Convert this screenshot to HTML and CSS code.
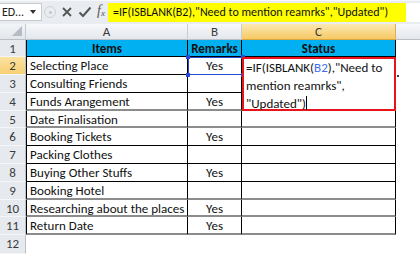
FILE: index.html
```html
<!DOCTYPE html>
<html>
<head>
<meta charset="utf-8">
<link rel="stylesheet" href="styles.css">
</head>
<body>
<div class="app">
  <div class="fbar">
    <div class="namebox"><span class="nbtext">ED...</span><span class="dd"></span></div>
    <div class="handle"><span class="ring"><span class="pip"></span></span></div>
    <div class="btns">
      <svg class="ico" width="12" height="12" viewBox="0 0 12 12"><path d="M2 2 L10 10 M10 2 L2 10" stroke="#555" stroke-width="1.8" fill="none"/></svg>
      <svg class="ico" width="14" height="12" viewBox="0 0 14 12"><path d="M1.5 6.5 L5 10 L12.5 1.5" stroke="#555" stroke-width="2" fill="none"/></svg>
      <span class="fx">f<sub>x</sub></span>
    </div>
    <div class="formula">=IF(ISBLANK(B2),"Need to mention reamrks","Updated")</div>
    <div class="fend"></div>
  </div>
  <div class="sheet">
    <div class="corner"><span class="tri"></span></div>
    <div class="ch">A</div>
    <div class="ch">B</div>
    <div class="ch sel">C</div>
    <div class="ch last"></div>

    <div class="rh">1</div>
    <div class="c hd">Items</div>
    <div class="c hd">Remarks</div>
    <div class="c hd">Status</div>
    <div class="e"></div>

    <div class="rh sel">2</div>
    <div class="c">Selecting Place</div>
    <div class="c y">Yes</div>
    <div class="c"></div>
    <div class="e"></div>

    <div class="rh">3</div>
    <div class="c">Consulting Friends</div>
    <div class="c y"></div>
    <div class="c"></div>
    <div class="e"></div>

    <div class="rh">4</div>
    <div class="c g">Funds Arangement</div>
    <div class="c y g">Yes</div>
    <div class="c g"></div>
    <div class="e"></div>

    <div class="rh">5</div>
    <div class="c g">Date Finalisation</div>
    <div class="c y g"></div>
    <div class="c g"></div>
    <div class="e"></div>

    <div class="rh">6</div>
    <div class="c">Booking Tickets</div>
    <div class="c y">Yes</div>
    <div class="c"></div>
    <div class="e"></div>

    <div class="rh">7</div>
    <div class="c">Packing Clothes</div>
    <div class="c y"></div>
    <div class="c"></div>
    <div class="e"></div>

    <div class="rh">8</div>
    <div class="c">Buying Other Stuffs</div>
    <div class="c y">Yes</div>
    <div class="c"></div>
    <div class="e"></div>

    <div class="rh">9</div>
    <div class="c g">Booking Hotel</div>
    <div class="c y g"></div>
    <div class="c g"></div>
    <div class="e"></div>

    <div class="rh">10</div>
    <div class="c g">Researching about the places</div>
    <div class="c y g">Yes</div>
    <div class="c g"></div>
    <div class="e"></div>

    <div class="rh">11</div>
    <div class="c g">Return Date</div>
    <div class="c y g">Yes</div>
    <div class="c g"></div>
    <div class="e"></div>

    <div class="rh">12</div>
    <div class="e"></div>
    <div class="e"></div>
    <div class="e"></div>
    <div class="e"></div>

    <div class="bsel"><span class="sq s1"></span><span class="sq s2"></span><span class="sq s3"></span><span class="sq s4"></span></div>
    <div class="editor">=IF(ISBLANK(<span class="ref">B2</span>),"Need to mention reamrks", "Updated")<span class="caret"></span></div>
    <span class="dot"></span>
  </div>
</div>
</body>
</html>
```

FILE: styles.css
```css
* { box-sizing: border-box; }
html, body { margin: 0; padding: 0; background: #fff; }
body { width: 420px; height: 254px; overflow: hidden; font-family: Carlito, Calibri, Lato, "Liberation Sans", sans-serif; }
.app { width: 420px; height: 254px; display: flex; flex-direction: column; }

.fbar { height: 24px; display: flex; align-items: flex-start; background: #e9ecf0; padding-top: 2px; border-top: 1px solid #f7f8fa; }
.namebox { width: 42px; height: 18px; background: #fff; border: 1px solid #c5cad1; border-left: none; display: flex; align-items: center; padding-left: 2px; font-size: 12px; color: #222; }
.nbtext { flex: 1; }
.dd { width: 0; height: 0; border-left: 3.5px solid transparent; border-right: 3.5px solid transparent; border-top: 4px solid #333; margin-right: 5px; }
.handle { width: 16px; height: 18px; display: flex; align-items: center; justify-content: center; }
.ring { width: 12px; height: 12px; border: 1px solid #cdd1d6; border-radius: 50%; display: flex; align-items: center; justify-content: center; }
.pip { width: 3px; height: 3px; border-radius: 50%; background: #c3c7cd; }
.btns { width: 50px; height: 18px; display: flex; align-items: center; gap: 5px; padding-left: 3px; }
.ico { display: block; }
.fx { font-family: "Liberation Serif", serif; font-style: italic; font-size: 14px; color: #555; line-height: 1; position: relative; top: -1px; }
.fx sub { font-size: 9px; vertical-align: -1px; }
.formula { width: 298px; height: 19px; background: #ffff00; font-size: 12px; line-height: 19px; padding-left: 5px; color: #111; white-space: nowrap; overflow: hidden; }
.fend { flex: 1; height: 19px; background: #fff; }

.sheet { position: relative; flex: 1; display: grid; grid-template-columns: 26px 162px 54px 154px 24px; grid-template-rows: 16px 17.3px repeat(10, 17.8px) 1fr; }
.corner { background: linear-gradient(#f2f4f7, #e2e6eb); border-right: 1px solid #c5cad1; border-bottom: 1px solid #b9c0c8; position: relative; }
.tri { position: absolute; right: 3px; bottom: 3px; width: 0; height: 0; border-left: 10px solid transparent; border-bottom: 10px solid #b6bcc3; }
.ch { background: linear-gradient(#f7f8fa, #e3e7ec); border-right: 1px solid #c8cdd4; border-bottom: 1px solid #b9c0c8; font-size: 13px; color: #3a3a3a; text-align: center; line-height: 15px; }
.ch.sel { background: linear-gradient(#fbe8b2, #f6c964); border-right-color: #e0b050; border-bottom-color: #d9a53c; }
.ch.last { border-right: none; }
.rh { background: #e6e9ee; border-right: 1px solid #b9c0c8; border-bottom: 1px solid #f4f5f7; font-size: 13px; color: #3a3a3a; text-align: center; line-height: 17px; }
.rh.sel { background: linear-gradient(#fbe2a0, #f7cf74); }
.c { background: #fff; border-right: 1px solid #000; border-bottom: 1px solid #000; font-size: 13px; color: #111; line-height: 17px; padding-left: 3px; white-space: nowrap; overflow: hidden; }
.rh + .c { border-left: 1px solid #000; }
.c.g { border-bottom: 2px solid #8c8c8c; }
.c.y { text-align: center; padding-left: 0; }
.c.hd { background: #00b0f0; font-weight: bold; text-align: center; padding-left: 0; color: #111; }
.e { background: #fff; }

.bsel { position: absolute; left: 188px; top: 33px; width: 55px; height: 18px; border: 1px solid #2a4bd7; }
.sq { position: absolute; width: 4px; height: 4px; background: #2a4bd7; }
.s1 { left: -3px; top: -3px; }
.s2 { left: -3px; bottom: -3px; }
.s3 { right: -3px; top: -3px; }
.s4 { right: -3px; bottom: -3px; }
.editor { position: absolute; left: 242px; top: 33px; width: 154px; height: 54px; border: 2px solid #e8141b; background: #fff; font-size: 13px; line-height: 18px; padding: 0 2px 0 2px; color: #111; }
.ref { color: #3d6cf0; }
.caret { display: inline-block; width: 1px; height: 14px; background: #000; vertical-align: -2px; }
.dot { position: absolute; left: 397px; top: 51px; width: 2px; height: 2px; background: #444; }
```
